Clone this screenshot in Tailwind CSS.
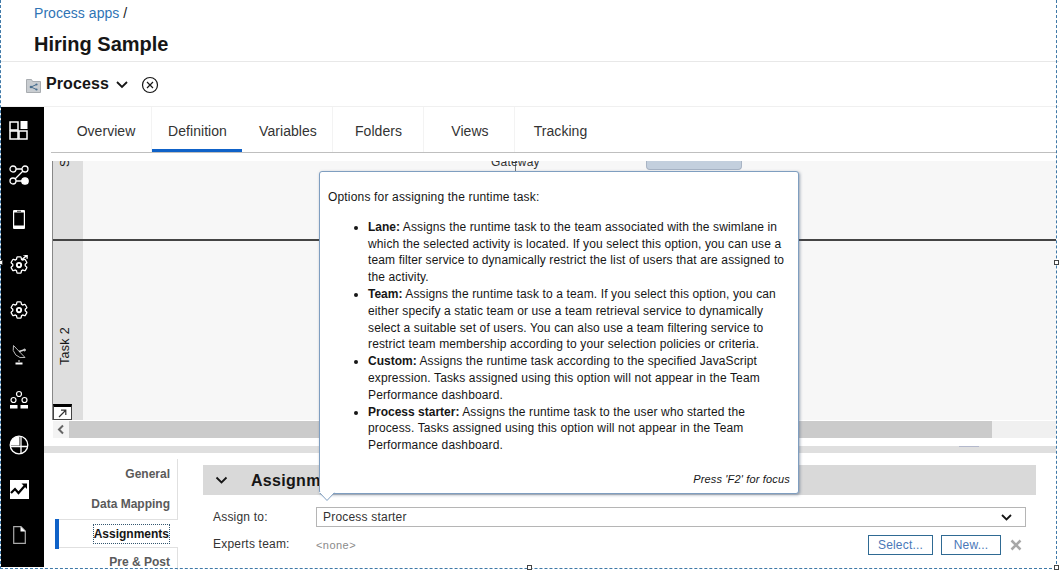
<!DOCTYPE html>
<html>
<head>
<meta charset="utf-8">
<script src="https://cdn.jsdelivr.net/npm/@tailwindcss/browser@4"></script>
</head>
<body>
<div class="relative w-[1059px] h-[570px] overflow-hidden bg-white font-['Liberation_Sans',Arial,sans-serif] text-[#161616]">
  <!-- header -->
  <div class="h-[62px] pl-[34px] pt-[5px] border-b border-[#e8e8e8]">
    <div class="text-[14px] leading-[17px] tracking-[0.05px]"><span class="text-[#2f74b5]">Process apps</span> /</div>
    <div class="mt-[10px] text-[20px] leading-[24px] font-bold">Hiring Sample</div>
  </div>
  <div class="h-[45px] flex items-center pl-[26px] border-b border-[#f0f0f0]">
    <svg width="15" height="15" viewBox="0 0 15 15" class="mt-[3px]"><path d="M.5 1.500h5l1 2h8v11H.5z" fill="#c9cdd1" stroke="#a8acb0"/><circle cx="5" cy="9" r="1.300" fill="#4a6f8f"/><circle cx="10.500" cy="6.500" r="1.100" fill="#4a6f8f"/><circle cx="10.500" cy="11.500" r="1.100" fill="#4a6f8f"/><path d="M5 9l5.500-2.500M5 9l5.500 2.500" stroke="#4a6f8f"/></svg>
    <span class="ml-[5px] text-[16px] leading-[20px] font-bold -mt-[1px] tracking-[0.1px]">Process</span>
    <svg width="14" height="10" viewBox="0 0 14 10" class="ml-[6px] mt-[2px]"><path d="M2 2l5 5 5-5" fill="none" stroke="#161616" stroke-width="1.800"/></svg>
    <svg width="18" height="18" viewBox="0 0 18 18" class="ml-[12px] mt-[2px]"><circle cx="9" cy="9" r="7.500" fill="none" stroke="#161616" stroke-width="1.200"/><path d="M6 6l6 6M12 6l-6 6" stroke="#161616" stroke-width="1.200"/></svg>
  </div>

  <div class="flex h-[463px]">
    <!-- sidebar -->
    <div class="w-[43px] ml-px shrink-0 h-[460px] bg-black text-white flex flex-col">
      <div class="h-[45px] flex items-center justify-center pr-[7px]"><svg width="20" height="20" viewBox="0 0 20 20" fill="none" stroke="#fff" stroke-width="1.500"><rect x="1" y="2" width="8" height="8"/><rect x="1" y="11" width="8" height="8"/><rect x="10" y="11" width="8" height="8"/><rect x="11.500" y="1" width="7" height="8" fill="#fff" stroke="none"/></svg></div>
      <div class="h-[45px] flex items-center justify-center pr-[7px]"><svg width="20" height="20" viewBox="0 0 20 20" fill="none" stroke="#fff" stroke-width="1.300"><circle cx="4" cy="4" r="3"/><circle cx="16" cy="4" r="3"/><circle cx="4" cy="16" r="3"/><circle cx="16" cy="16" r="3.200" fill="#fff"/><path d="M7 4h6M14 6L6 14M7 16h6"/></svg></div>
      <div class="h-[45px] flex items-center justify-center pr-[7px]"><svg width="12" height="20" viewBox="0 0 12 20"><rect x="0" y="0" width="12" height="19" rx="1" fill="#fff"/><rect x="1.200" y="2.500" width="9.600" height="13" fill="#000"/><rect x="4" y=".8" width="4" height=".8" fill="#000"/></svg></div>
      <div class="h-[45px] flex items-center justify-center pr-[7px]"><svg width="20" height="20" viewBox="0 0 32 32" fill="#fff"><path fill-rule="evenodd" d="M27,16.760c0-.25,0-.5,0-.76s0-.51,0-.77l1.920-1.680A2,2,0,0,0,29.300,11L26.940,7a2,2,0,0,0-1.730-1,2,2,0,0,0-.64.100l-2.430.82a11.350,11.350,0,0,0-1.310-.75l-.51-2.520a2,2,0,0,0-2-1.610H13.640a2,2,0,0,0-2,1.610l-.51,2.520a11.480,11.480,0,0,0-1.320.75L7.430,6.060A2,2,0,0,0,6.790,6,2,2,0,0,0,5.060,7L2.700,11a2,2,0,0,0,.41,2.510L5,15.240c0,.25,0,.5,0,.76s0,.51,0,.77L3.110,18.450A2,2,0,0,0,2.700,21L5.060,25a2,2,0,0,0,1.730,1,2,2,0,0,0,.64-.1l2.430-.82a11.350,11.350,0,0,0,1.310.75l.51,2.520a2,2,0,0,0,2,1.610h4.720a2,2,0,0,0,2-1.610l.51-2.520a11.480,11.480,0,0,0,1.320-.75l2.420.82a2,2,0,0,0,.64.1,2,2,0,0,0,1.730-1L29.300,21a2,2,0,0,0-.41-2.510ZM25.210,24l-3.430-1.160a8.860,8.860,0,0,1-2.710,1.570L18.360,28H13.640l-.71-3.550a9.360,9.360,0,0,1-2.700-1.570L6.790,24,4.430,20l2.720-2.400a8.900,8.900,0,0,1,0-3.130L4.430,12,6.790,8l3.430,1.160a8.860,8.860,0,0,1,2.710-1.570L13.640,4h4.720l.71,3.550a9.360,9.360,0,0,1,2.700,1.570L25.210,8,27.570,12l-2.720,2.400a8.900,8.900,0,0,1,0,3.130L27.570,20Z"/><circle cx="16" cy="16" r="3.500" fill="none" stroke="#fff" stroke-width="3"/><path d="M20 8l8-7M23 0h6v6" fill="none" stroke="#fff" stroke-width="2.200"/></svg></div>
      <div class="h-[45px] flex items-center justify-center pr-[7px]"><svg width="20" height="20" viewBox="0 0 32 32" fill="#fff"><path fill-rule="evenodd" d="M27,16.760c0-.25,0-.5,0-.76s0-.51,0-.77l1.920-1.680A2,2,0,0,0,29.300,11L26.940,7a2,2,0,0,0-1.730-1,2,2,0,0,0-.64.100l-2.430.82a11.350,11.350,0,0,0-1.310-.75l-.51-2.520a2,2,0,0,0-2-1.610H13.640a2,2,0,0,0-2,1.610l-.51,2.520a11.480,11.480,0,0,0-1.320.75L7.430,6.060A2,2,0,0,0,6.790,6,2,2,0,0,0,5.060,7L2.700,11a2,2,0,0,0,.41,2.510L5,15.240c0,.25,0,.5,0,.76s0,.51,0,.77L3.110,18.450A2,2,0,0,0,2.700,21L5.060,25a2,2,0,0,0,1.730,1,2,2,0,0,0,.64-.1l2.430-.82a11.350,11.350,0,0,0,1.310.75l.51,2.520a2,2,0,0,0,2,1.610h4.720a2,2,0,0,0,2-1.610l.51-2.520a11.480,11.480,0,0,0,1.320-.75l2.420.82a2,2,0,0,0,.64.1,2,2,0,0,0,1.730-1L29.300,21a2,2,0,0,0-.41-2.510ZM25.210,24l-3.430-1.160a8.860,8.860,0,0,1-2.710,1.570L18.360,28H13.640l-.71-3.550a9.360,9.360,0,0,1-2.700-1.570L6.790,24,4.430,20l2.720-2.400a8.900,8.900,0,0,1,0-3.130L4.430,12,6.790,8l3.430,1.160a8.860,8.860,0,0,1,2.710-1.570L13.640,4h4.720l.71,3.550a9.360,9.360,0,0,1,2.700,1.570L25.210,8,27.570,12l-2.720,2.400a8.900,8.900,0,0,1,0,3.130L27.570,20Z"/><circle cx="16" cy="16" r="3.500" fill="none" stroke="#fff" stroke-width="3"/></svg></div>
      <div class="h-[45px] flex items-center justify-center pr-[7px]"><svg width="18" height="20" viewBox="0 0 18 20" fill="none" stroke="#bbb" stroke-width="1"><path d="M3.500 .5A9.500 9.500 0 0 0 15 12.500z"/><path d="M9 6.500l5-1.500" stroke="#ddd" stroke-width="1.500"/><circle cx="14.500" cy="5" r="1" fill="#ddd"/><path d="M9 15v2" stroke="#ddd"/><path d="M5.500 18.500h7" stroke="#fff" stroke-width="2"/></svg></div>
      <div class="h-[45px] flex items-center justify-center pr-[7px]"><svg width="20" height="20" viewBox="0 0 20 20" fill="none" stroke="#fff" stroke-width="1.200"><circle cx="10" cy="4" r="2.500"/><circle cx="4.500" cy="10" r="2.500"/><circle cx="15.500" cy="10" r="2.500"/><rect x="1" y="15" width="7.500" height="3.500" fill="#fff" stroke="none"/><rect x="11.500" y="15" width="7.500" height="3.500" fill="#fff" stroke="none"/></svg></div>
      <div class="h-[45px] flex items-center justify-center pr-[7px]"><svg width="20" height="20" viewBox="0 0 20 20" fill="none" stroke="#fff" stroke-width="1.300"><circle cx="10" cy="10" r="8.800"/><path d="M1.500 11.500h17M12 11.500V18M12 1.500v10"/><path d="M1.200 10.500A8.800 8.800 0 0 1 10.500 1.200v9.300z" fill="#fff" stroke="none"/></svg></div>
      <div class="h-[45px] flex items-center justify-center pr-[7px]"><svg width="19" height="19" viewBox="0 0 19 19"><rect width="19" height="19" fill="#fff"/><path d="M1 13l4-4 3.500 4L15 5.500" fill="none" stroke="#000" stroke-width="2.200"/><path d="M11.500 3.500H17V9z" fill="#000"/></svg></div>
      <div class="h-[45px] flex items-center justify-center pr-[7px]"><svg width="13" height="18" viewBox="0 0 13 18"><path d="M.7.7H8L12.300 5v12.300H.7z" fill="none" stroke="#aaa" stroke-width="1.200"/><path d="M7.500.5L12.500 5.500H7.500z" fill="#fff"/></svg></div>
    </div>

    <!-- work area -->
    <div class="flex-1 min-w-0 mr-[3px] flex flex-col">
      <!-- tabs -->
      <div class="h-[46px] ml-[7px] flex border-b border-[#bfbfbf] text-[14px] text-[#333] leading-[48px] tracking-[0.05px]">
        <div class="w-[101px] text-center pl-[10px] border-r border-[#f3f3f3] whitespace-nowrap">Overview</div>
        <div class="w-[90px] text-center pl-[1px] border-b-[3px] border-[#0f62c8] h-[45px] whitespace-nowrap">Definition</div>
        <div class="w-[91px] text-center pl-[2px] border-r border-[#f3f3f3] whitespace-nowrap">Variables</div>
        <div class="w-[91px] text-center pl-[1px] border-r border-[#f3f3f3] whitespace-nowrap">Folders</div>
        <div class="w-[91px] text-center pl-[2px] border-r border-[#f3f3f3] whitespace-nowrap">Views</div>
        <div class="w-[91px] text-center whitespace-nowrap">Tracking</div>
      </div>
      <!-- canvas -->
      <div class="mt-[8px] ml-[8px] h-[259px] flex bg-[#f7f7f7] overflow-hidden">
        <div class="relative w-[31px] bg-[#dedede] border-l border-[#888] shrink-0 flex flex-col">
          <div class="h-[80px] border-b-2 border-[#444] -mr-[1px]">
            <div class="-mt-[4px] ml-[6px] text-[12px] leading-[12px] rotate-[-90deg] w-[12px] h-[12px] flex items-center justify-center">S</div>
          </div>
          <div class="relative flex-1">
            <div class="absolute left-[-6px] top-[98px] w-[36px] text-center rotate-[-90deg] text-[12.500px] leading-[16px] tracking-[0.3px] whitespace-nowrap">Task 2</div>
            <div class="absolute left-0 bottom-0 w-[19px] h-[16px] bg-white border border-[#444] border-t-[3px] border-t-black flex items-center justify-center"><svg width="9" height="9" viewBox="0 0 9 9" fill="none" stroke="#333" stroke-width="1.200"><path d="M1 8l6.500-6.500M3 1.200h4.800V6"/></svg></div>
          </div>
        </div>
        <div class="flex-1 relative">
          <div class="h-[80px] border-b-2 border-[#444]"></div>
          <div class="absolute top-0 left-[432px] w-px h-[11px] bg-[#777]"></div>
          <div class="absolute left-[408px] top-0 text-[12px] leading-[2px] h-[9px] text-[#333] tracking-[0.2px]">Gateway</div>
          <div class="absolute left-[563px] top-0 w-[96px] h-[9px] bg-[#c3cfdd] border border-t-0 border-[#a8b4c4] rounded-b-[4px]"></div>
        </div>
      </div>
      <!-- hscrollbar -->
      <div class="ml-[9px] h-[17px] mt-px flex bg-[#f0f0f0]">
        <div class="w-[16px] flex items-center justify-center bg-[#f3f3f3]"><svg width="8" height="11" viewBox="0 0 8 11"><path d="M6 1.500L2 5.500l4 4" fill="none" stroke="#666" stroke-width="2"/></svg></div>
        <div class="w-[923px] bg-[#cbcbcb]"></div>
      </div>
      <!-- splitter -->
      <div class="mt-[8px] h-[7px] bg-[#dfdfdf] relative"><div class="absolute left-[915px] top-0 w-[20px] h-px bg-[#b4b9cc]"></div></div>
      <!-- properties -->
      <div class="flex flex-1 min-h-0 overflow-hidden pt-[6px]">
        <div class="w-[123px] ml-[11px] shrink-0 text-[12px] font-bold text-[#5a5a5a] text-right">
          <div class="h-[60px] border-r border-[#e0e0e0] pr-[7px] leading-[30px]">General<br>Data Mapping</div>
          <div class="h-[29px] border-y border-[#e0e0e0] relative flex items-center justify-end pr-[9px] text-[#161616]">
            <div class="absolute left-0 top-0 -mt-px h-[30px] w-[4px] bg-[#0f62c8]"></div>
            <span class="outline-1 outline-dotted outline-[#33566f]">Assignments</span>
          </div>
          <div class="border-r border-[#e0e0e0] pr-[7px] leading-[29px] h-[30px]">Pre &amp; Post</div>
        </div>
        <div class="flex-1 ml-[25px] mr-[20px] pt-[6px] text-[12px] text-[#333] min-w-0">
          <div class="h-[30px] bg-[#d9d9d9] flex items-center pl-[12px]">
            <svg width="13" height="9" viewBox="0 0 13 9"><path d="M1.500 1.500l5 5 5-5" fill="none" stroke="#161616" stroke-width="1.800"/></svg>
            <span class="ml-[23px] mt-[2px] text-[16px] font-bold tracking-[0.3px] text-[#161616]">Assignments</span>
          </div>
          <div class="flex items-center h-[20px] mt-[12px] ml-[10px] mr-[10px]">
            <span class="w-[103px] tracking-[0.2px]">Assign to:</span>
            <div class="flex-1 h-[20px] border border-[#b5b5b5] flex items-center justify-between pl-[6px] pr-[13px] tracking-[0.2px]"><span>Process starter</span><svg width="11" height="7" viewBox="0 0 11 7"><path d="M1 1l4.500 4.500L10 1" fill="none" stroke="#161616" stroke-width="1.800"/></svg></div>
          </div>
          <div class="flex items-center h-[20px] mt-[7px] ml-[10px]">
            <span class="w-[103px] tracking-[0.2px]">Experts team:</span>
            <span class="text-[#8a8a8a] text-[11px] tracking-[0.45px] mt-[3px]">&lt;none&gt;</span>
            <div class="ml-auto mt-[2px] flex items-center text-[12px] text-[#4a78b8] pr-[14px]">
              <div class="w-[65px] h-[20px] border border-[#2f6a93] text-center leading-[18px] tracking-[0.2px]">Select...</div>
              <div class="ml-[8px] w-[60px] h-[20px] border border-[#2f6a93] text-center leading-[18px] tracking-[0.2px]">New...</div>
              <svg width="12" height="12" viewBox="0 0 12 12" class="ml-[9px]"><path d="M1.500 1.500l9 9M10.500 1.500l-9 9" stroke="#a8a8a8" stroke-width="2.500"/></svg>
            </div>
          </div>
        </div>
      </div>
    </div>
  </div>

  <!-- popover -->
  <div class="absolute left-[319px] top-[171px] w-[480px] h-[323px] bg-white border border-[#7f9ec0] rounded-[3px] shadow-[1px_1px_3px_rgba(60,80,110,0.5)] px-[8px] pt-[17px] text-[12px] leading-[16.800px] text-[#161616] tracking-[0.17px] whitespace-nowrap">
    <p>Options for assigning the runtime task:</p>
    <ul class="mt-[13px] ml-[40px] list-disc tracking-[0.13px]">
      <li><b class="tracking-[0px]">Lane:</b> Assigns the runtime task to the team associated with the swimlane in<br>which the selected activity is located. If you select this option, you can use a<br>team filter service to dynamically restrict the list of users that are assigned to<br>the activity.</li>
      <li><b class="tracking-[0px]">Team:</b> Assigns the runtime task to a team. If you select this option, you can<br>either specify a static team or use a team retrieval service to dynamically<br>select a suitable set of users. You can also use a team filtering service to<br>restrict team membership according to your selection policies or criteria.</li>
      <li><b class="tracking-[0px]">Custom:</b> Assigns the runtime task according to the specified JavaScript<br>expression. Tasks assigned using this option will not appear in the Team<br>Performance dashboard.</li>
      <li><b class="tracking-[0px]">Process starter:</b> Assigns the runtime task to the user who started the<br>process. Tasks assigned using this option will not appear in the Team<br>Performance dashboard.</li>
    </ul>
    <div class="absolute right-[8px] bottom-[7px] text-[11px] leading-[14px] italic">Press 'F2' for focus</div>
    <svg width="18" height="10" viewBox="0 0 18 10" class="absolute left-[-1px] top-full -mt-px"><path d="M0 0L8 8.500 16 0" fill="#fff" stroke="#7f9ec0"/><path d="M0 0h16" stroke="#fff" stroke-width="1.500"/></svg>
  </div>

  <!-- selection frame -->
  <div class="absolute left-0 top-0 w-[1057px] h-[569px] border-l border-r border-b border-dashed border-[#3f79a8] pointer-events-none"></div>
  <div class="absolute left-[-2px] top-[260px] w-[5px] h-[5px] bg-white border border-[#444]"></div>
  <div class="absolute left-[1054px] top-[260px] w-[5px] h-[5px] bg-white border border-[#444]"></div>
  <div class="absolute left-[527px] top-[565px] w-[5px] h-[5px] bg-white border border-[#444]"></div>
  <div class="absolute left-[1054px] top-[565px] w-[5px] h-[5px] bg-white border border-[#444]"></div>
</div>
</body>
</html>
